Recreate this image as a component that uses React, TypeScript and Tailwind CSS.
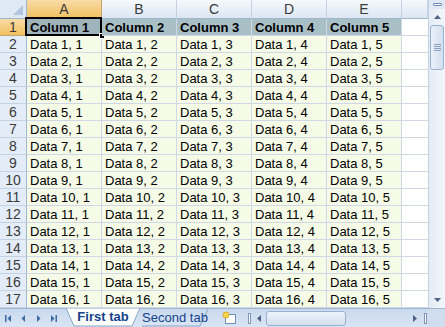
import React from 'react';

const cols = ['A', 'B', 'C', 'D', 'E'];
const rows = Array.from({ length: 16 }, (_, i) => i + 1);

const font = "font-['Liberation_Sans',Arial,sans-serif]";

const ColHeader: React.FC<{ label: string; active?: boolean; wide?: boolean }> = ({ label, active, wide }) => (
    <div
        className={`h-[19px] flex items-center justify-center border-r border-b text-[14px] leading-none ${
            wide ? 'flex-1' : 'w-[75px]'
        } ${
            active
                ? 'bg-gradient-to-b from-[#f9dba5] to-[#f1c15f] border-r-[#c2a46c] border-b-[#c2a46c] text-[#3b3b3b]'
                : 'bg-gradient-to-b from-[#f6f9fd] to-[#dde6f2] border-r-[#c5d2e3] border-b-[#9eb6ce] text-[#3b3b3b]'
        }`}
    >
        {label}
    </div>
);

const RowHeader: React.FC<{ n: number; active?: boolean }> = ({ n, active }) => (
    <div
        className={`w-[27px] h-[17px] shrink-0 flex items-center justify-center border-r border-b text-[14px] leading-none ${
            active
                ? 'bg-gradient-to-b from-[#f9dba5] to-[#f1c15f] border-r-[#c2a46c] border-b-[#c2a46c] text-[#3b3b3b]'
                : 'bg-[#e4ecf7] border-r-[#9eb6ce] border-b-[#c5d2e3] text-[#3b3b3b]'
        }`}
    >
        {n}
    </div>
);

const NavIcons = () => (
    <svg width="66" height="19" viewBox="0 0 66 19">
        <g fill="#3f6aa6">
            <rect x="5" y="6" width="1.5" height="7" />
            <polygon points="11,6 11,13 7.5,9.5" />
            <polygon points="25,6 25,13 21.5,9.5" />
            <polygon points="37,6 37,13 40.5,9.5" />
            <polygon points="51,6 51,13 54.5,9.5" />
            <rect x="55.5" y="6" width="1.5" height="7" />
        </g>
    </svg>
);

export default function App() {
    return (
        <div className={`w-[445px] h-[327px] overflow-hidden flex flex-col bg-white ${font}`}>
            <div className="flex flex-1 min-h-0">
                {/* Sheet grid */}
                <div className="flex-1 flex flex-col">
                    <div className="flex">
                        <div className="w-[27px] h-[19px] shrink-0 border-r border-b border-r-[#9eb6ce] border-b-[#9eb6ce] bg-[#dfe8f5] flex items-end justify-end pr-[3px] pb-[3px]">
                            <svg width="10" height="10" viewBox="0 0 10 10">
                                <polygon points="10,0 10,10 0,10" fill="#b4c6dd" />
                            </svg>
                        </div>
                        {cols.map(c => (
                            <ColHeader key={c} label={c} active={c === 'A'} />
                        ))}
                        <ColHeader label="" wide />
                    </div>

                    {/* Row 1: column titles */}
                    <div className="flex">
                        <RowHeader n={1} active />
                        {cols.map((c, i) => (
                            <div
                                key={c}
                                className={`relative w-[75px] h-[17px] border-r border-b border-[#d0d7e5] pl-[3px] flex items-center text-[13px] font-bold text-black leading-none ${
                                    i === 0 ? 'bg-[#9fb3bb]' : 'bg-[#a9bfc6]'
                                }`}
                            >
                                Column {i + 1}
                                {i === 0 && (
                                    <>
                                        <div className="absolute -left-[2px] -top-[2px] w-[77px] h-[19px] border-2 border-black" />
                                        <div className="absolute -right-[4px] -bottom-[4px] w-[6px] h-[6px] bg-black border border-white" />
                                    </>
                                )}
                            </div>
                        ))}
                        <div className="flex-1 h-[17px] border-b border-[#d0d7e5] bg-white" />
                    </div>

                    {rows.map(r => (
                        <div key={r} className="flex">
                            <RowHeader n={r + 1} />
                            {cols.map((c, i) => (
                                <div
                                    key={c}
                                    className="w-[75px] h-[17px] border-r border-b border-[#d0d7e5] bg-[#f5fbe6] pl-[3px] flex items-center text-[13px] text-black leading-none whitespace-nowrap"
                                >
                                    Data {r}, {i + 1}
                                </div>
                            ))}
                            <div className="flex-1 h-[17px] border-b border-[#d0d7e5] bg-white" />
                        </div>
                    ))}
                </div>

                {/* Vertical scrollbar */}
                <div className="w-[17px] shrink-0 flex flex-col bg-gradient-to-r from-[#e3ebf5] to-[#f3f7fc] border-l border-[#c5d2e3]">
                    <div className="h-[9px] flex items-center justify-center bg-[#dfe8f4]">
                        <div className="w-[9px] h-[3px] border border-[#6e8db8] bg-white rounded-[1px]" />
                    </div>
                    <div className="h-[16px] flex items-center justify-center">
                        <svg width="7" height="4" viewBox="0 0 7 4">
                            <polygon points="0,4 7,4 3.5,0" fill="#4d6185" />
                        </svg>
                    </div>
                    <div className="mx-[1px] h-[45px] rounded-[3px] border border-[#9ab0cf] bg-gradient-to-r from-[#e9f0f9] to-[#d4e0ef] flex flex-col items-center justify-center gap-[1px]">
                        <div className="w-[7px] h-px bg-[#8ea3c1]" />
                        <div className="w-[7px] h-px bg-[#8ea3c1]" />
                        <div className="w-[7px] h-px bg-[#8ea3c1]" />
                        <div className="w-[7px] h-px bg-[#8ea3c1]" />
                    </div>
                    <div className="flex-1" />
                    <div className="h-[16px] flex items-center justify-center">
                        <svg width="7" height="4" viewBox="0 0 7 4">
                            <polygon points="0,0 7,0 3.5,4" fill="#4d6185" />
                        </svg>
                    </div>
                </div>
            </div>

            {/* Sheet tabs bar */}
            <div className="h-[19px] shrink-0 flex bg-gradient-to-b from-[#c9d9ee] to-[#d9e5f4] border-t border-[#9eb6ce]">
                <div className="w-[66px] shrink-0">
                    <NavIcons />
                </div>
                <div className="relative w-[74px] shrink-0 flex items-center justify-center -mt-px">
                    <svg className="absolute inset-0" width="74" height="19" viewBox="0 0 74 19">
                        <polygon points="0,0 74,0 66,18 8,18" fill="#ffffff" stroke="#8ba4c4" />
                    </svg>
                    <span className="relative text-[13px] font-bold text-[#15428b] leading-none pb-[2px]">First tab</span>
                </div>
                <div className="relative w-[82px] shrink-0 -ml-[6px] flex items-center justify-center">
                    <svg className="absolute inset-0" width="82" height="18" viewBox="0 0 82 18">
                        <polyline points="74,0 66,17 8,17" fill="none" stroke="#8ba4c4" />
                    </svg>
                    <span className="relative text-[13px] text-[#15428b] leading-none pb-[2px]">Second tab</span>
                </div>
                <div className="w-[34px] shrink-0 flex items-center justify-center -ml-[4px]">
                    <svg width="16" height="14" viewBox="0 0 16 14">
                        <rect x="4.5" y="3.5" width="10" height="9" fill="#ffffff" stroke="#6f8fb9" />
                        <circle cx="5" cy="4" r="3" fill="#f7d54e" stroke="#d9a31a" strokeWidth="0.8" />
                    </svg>
                </div>
                <div className="w-[6px] shrink-0 flex items-center justify-center">
                    <div className="w-[3px] h-[11px] bg-white border border-[#7f96b8]" />
                </div>
                {/* Horizontal scrollbar */}
                <div className="flex-1 flex items-center">
                    <div className="w-[14px] flex items-center justify-center">
                        <svg width="4" height="7" viewBox="0 0 4 7">
                            <polygon points="4,0 4,7 0,3.5" fill="#4d6185" />
                        </svg>
                    </div>
                    <div className="w-[80px] h-[15px] rounded-[3px] border border-[#9ab0cf] bg-gradient-to-b from-[#edf3fa] to-[#d4e0ef]" />
                    <div className="flex-1" />
                    <div className="w-[14px] flex items-center justify-center">
                        <svg width="4" height="7" viewBox="0 0 4 7">
                            <polygon points="0,0 0,7 4,3.5" fill="#4d6185" />
                        </svg>
                    </div>
                    <div className="w-[6px] flex items-center justify-center">
                        <div className="w-[3px] h-[11px] bg-white border border-[#7f96b8]" />
                    </div>
                </div>
                <div className="w-[17px] shrink-0 bg-[#d0ddef]" />
            </div>
        </div>
    );
}
